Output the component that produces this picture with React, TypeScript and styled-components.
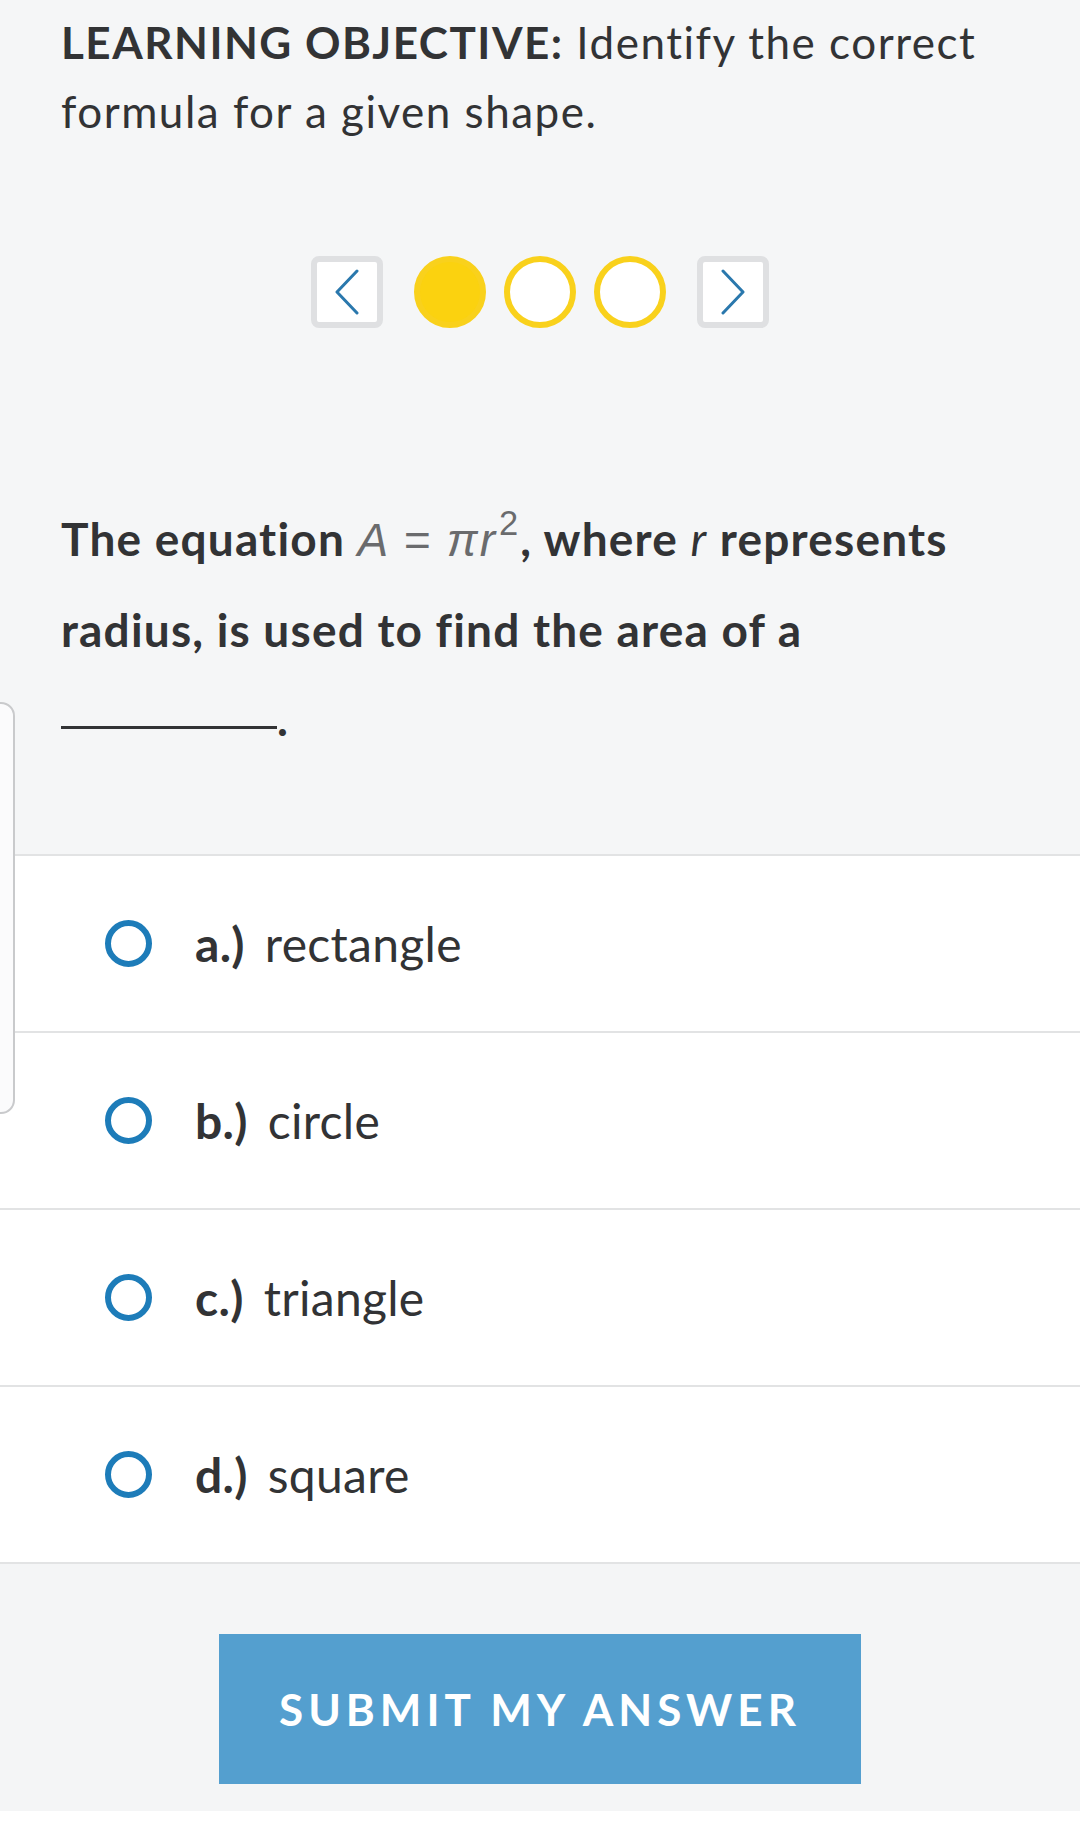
import styled, { createGlobalStyle } from "styled-components";

const GlobalStyle = createGlobalStyle`
  html, body {
    margin: 0;
    padding: 0;
    background: #ffffff;
  }
  body {
    font-family: Lato, "Noto Sans", sans-serif;
    color: #323335;
  }
  * {
    box-sizing: border-box;
  }
`;

const options = [
  { key: "a.)", label: "rectangle" },
  { key: "b.)", label: "circle" },
  { key: "c.)", label: "triangle" },
  { key: "d.)", label: "square" },
];

function Chevron({ dir }: { dir: "left" | "right" }) {
  return (
    <svg width="26" height="46" viewBox="0 0 26 46" fill="none">
      <path
        d={dir === "left" ? "M23 2 L3 23 L23 44" : "M3 2 L23 23 L3 44"}
        stroke="#2a78ad"
        strokeWidth="3"
        strokeLinecap="round"
        strokeLinejoin="round"
      />
    </svg>
  );
}

function App() {
  return (
    <Page>
      <GlobalStyle />
      <SidePanel />
      <Objective>
        <strong>LEARNING OBJECTIVE:</strong> Identify the correct formula for a
        given shape.
      </Objective>

      <Pager>
        <NavButton aria-label="Previous">
          <Chevron dir="left" />
        </NavButton>
        <Dots>
          <Dot $filled />
          <Dot />
          <Dot />
        </Dots>
        <NavButton aria-label="Next">
          <Chevron dir="right" />
        </NavButton>
      </Pager>

      <Question>
        The equation <MathExpr>A = πr<sup>2</sup></MathExpr>, where{" "}
        <Var>r</Var> represents radius, is used to find the area of a{" "}
        <Blank />.
      </Question>

      <OptionList>
        {options.map((o) => (
          <OptionRow key={o.key}>
            <Radio />
            <OptionKey>{o.key}</OptionKey>
            <OptionLabel>{o.label}</OptionLabel>
          </OptionRow>
        ))}
      </OptionList>

      <SubmitArea>
        <SubmitButton type="button">SUBMIT MY ANSWER</SubmitButton>
      </SubmitArea>
    </Page>
  );
}

export default App;

const Page = styled.main`
  position: relative;
  width: 1080px;
  min-height: 1825px;
  background: #ffffff;
`;

const SidePanel = styled.div`
  position: absolute;
  left: -20px;
  top: 702px;
  width: 35px;
  height: 412px;
  border: 2px solid #c9cacc;
  border-radius: 0 14px 14px 0;
  background: #fbfbfc;
  z-index: 2;
`;

const Objective = styled.p`
  margin: 0;
  padding: 8px 61px 0;
  background: #f5f6f7;
  font-size: 44px;
  line-height: 69px;
  font-weight: 400;
  letter-spacing: 1.5px;
  strong {
    font-weight: 700;
  }
`;

const Pager = styled.div`
  display: flex;
  justify-content: center;
  align-items: center;
  gap: 31px;
  padding: 110px 0 0;
  background: #f5f6f7;
`;

const NavButton = styled.button`
  width: 72px;
  height: 72px;
  padding: 0;
  display: flex;
  align-items: center;
  justify-content: center;
  background: #ffffff;
  border: 6px solid #dfe0e2;
  border-radius: 8px;
`;

const Dots = styled.div`
  display: flex;
  gap: 18px;
`;

const Dot = styled.span<{ $filled?: boolean }>`
  width: 72px;
  height: 72px;
  border-radius: 50%;
  border: 6px solid #f9d11c;
  background: ${(p) => (p.$filled ? "#fbd20f" : "#ffffff")};
`;

const Question = styled.p`
  margin: 0;
  padding: 166px 118px 91px 61px;
  background: #f5f6f7;
  font-size: 46px;
  line-height: 89px;
  font-weight: 700;
  letter-spacing: 1.2px;
`;

const MathExpr = styled.span`
  font-family: "Liberation Sans", Arial, sans-serif;
  font-style: italic;
  font-weight: 400;
  letter-spacing: 2px;
  color: #6a6b6d;
  sup {
    font-style: normal;
    font-size: 0.75em;
    line-height: 0;
    vertical-align: 0.6em;
    margin-left: 2px;
  }
`;

const Var = styled.span`
  font-style: italic;
  font-weight: 400;
`;

const Blank = styled.span`
  display: inline-block;
  width: 216px;
  vertical-align: 7px;
  border-bottom: 3px solid #323335;
`;

const OptionList = styled.ul`
  list-style: none;
  margin: 0;
  padding: 0;
  border-top: 2px solid #e2e3e4;
`;

const OptionRow = styled.li`
  display: flex;
  align-items: center;
  height: 177px;
  padding-left: 105px;
  background: #ffffff;
  border-bottom: 2px solid #e2e3e4;
  font-size: 48px;
  letter-spacing: 0.3px;
`;

const Radio = styled.span`
  width: 47px;
  height: 47px;
  border-radius: 50%;
  border: 6px solid #1d7cb9;
  margin-right: 43px;
`;

const OptionKey = styled.span`
  font-weight: 700;
  margin-right: 20px;
`;

const OptionLabel = styled.span`
  font-weight: 400;
`;

const SubmitArea = styled.div`
  display: flex;
  justify-content: center;
  padding: 70px 0 27px;
  background: #f4f5f6;
`;

const SubmitButton = styled.button`
  width: 642px;
  height: 150px;
  border: none;
  background: #549fcf;
  color: #ffffff;
  font-family: Lato, "Noto Sans", sans-serif;
  font-size: 44px;
  font-weight: 700;
  letter-spacing: 5px;
`;
